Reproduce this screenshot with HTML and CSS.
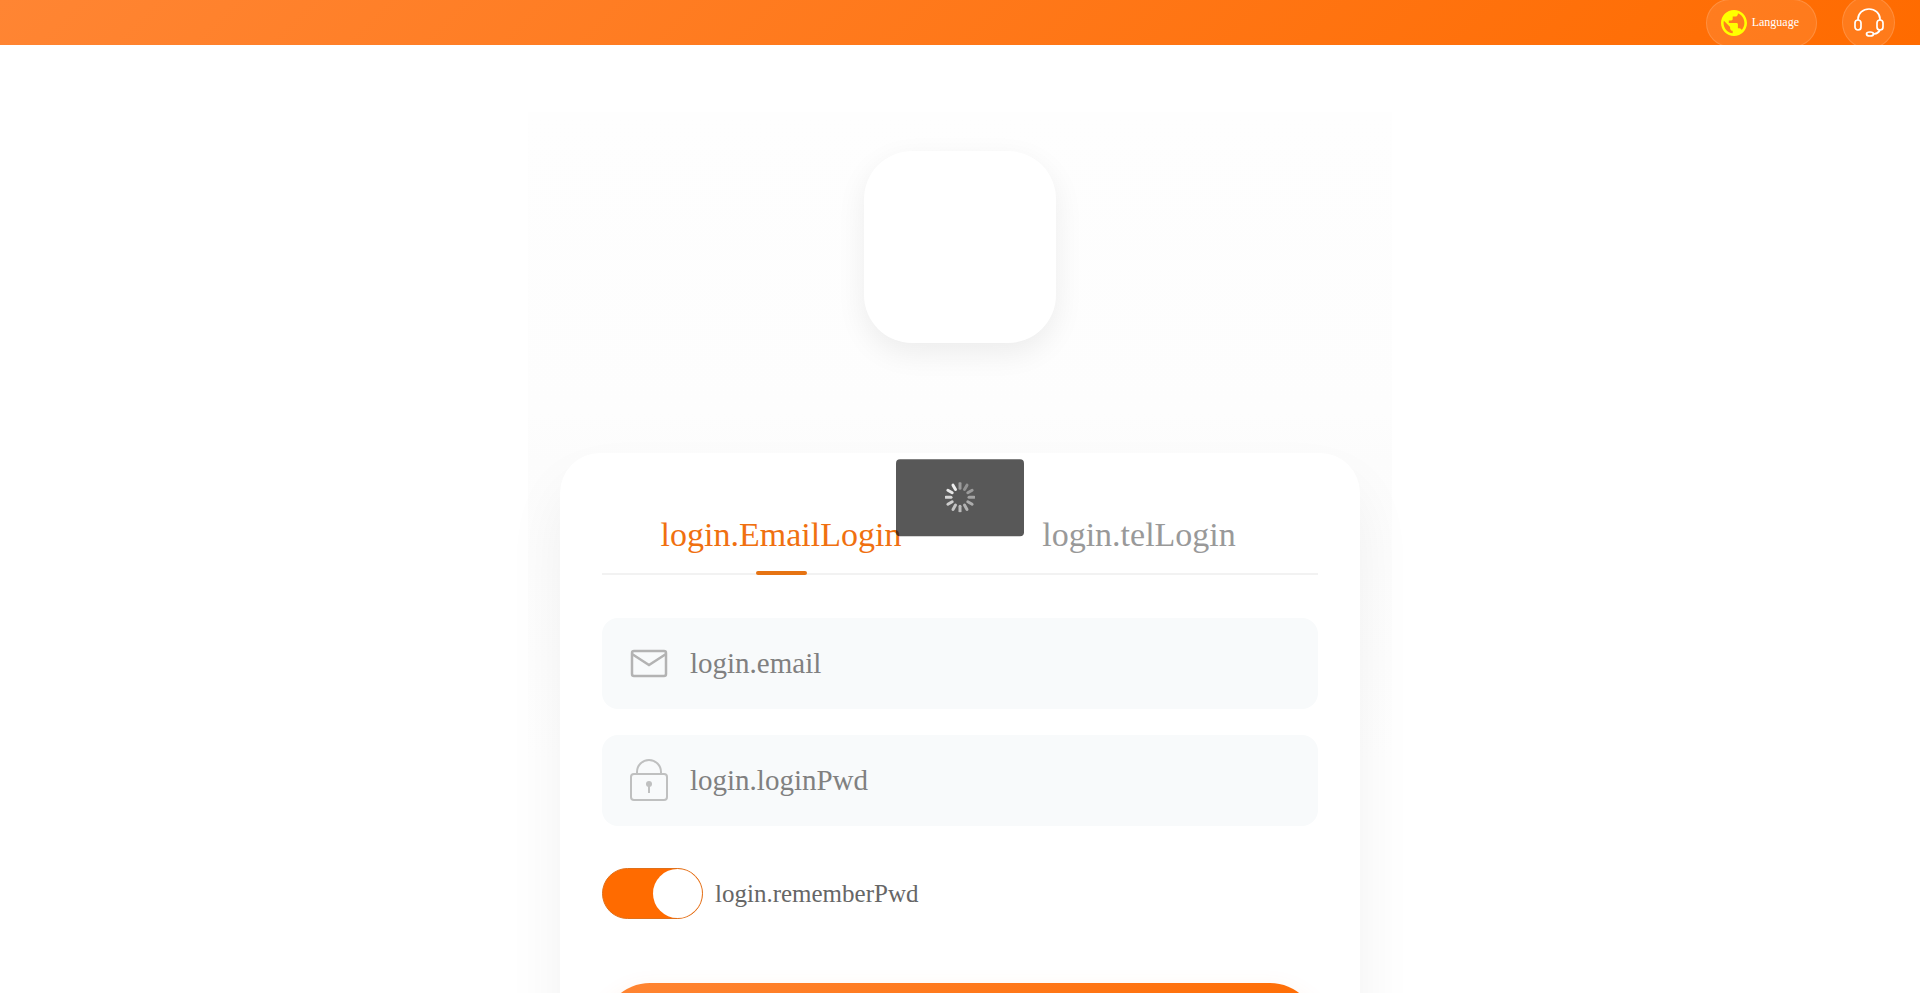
FILE: index.html
```html
<!DOCTYPE html>
<html lang="en">
<head>
  <meta charset="UTF-8">
  <meta name="viewport" content="width=device-width, initial-scale=1.0">
  <title>Login</title>
  <link rel="stylesheet" href="styles.css">
</head>
<body>
  <header class="top-bar">
    <button type="button" class="language-btn">
      <svg class="globe" viewBox="2 2 20 20" aria-hidden="true">
        <path d="M12 2C6.480 2 2 6.480 2 12s4.480 10 10 10 10-4.480 10-10S17.520 2 12 2zm-1 17.930c-3.950-.490-7-3.850-7-7.930 0-.620.080-1.210.210-1.790L9 15v1c0 1.100.900 2 2 2v1.930zm6.900-2.540c-.260-.810-1-1.390-1.900-1.390h-1v-3c0-.550-.450-1-1-1H8v-2h2c.550 0 1-.450 1-1V7h2c1.100 0 2-.900 2-2v-.410c2.930 1.190 5 4.060 5 7.410 0 2.080-.800 3.970-2.100 5.390z"/>
      </svg>
      <span>Language</span>
    </button>
    <button type="button" class="service-btn">
      <svg class="headset" viewBox="0 0 30 30" aria-hidden="true">
        <path d="M4 12v-1a11 10 0 0 1 22 0v1"/>
        <rect x="1" y="12" width="6" height="10" rx="3"/>
        <rect x="23" y="12" width="6" height="10" rx="3"/>
        <path d="M26 22c-1 2-3 3.500-6 4"/>
        <ellipse cx="16" cy="26" rx="3.500" ry="2"/>
      </svg>
    </button>
  </header>

  <main class="login-page">
    <div class="logo"></div>

    <form class="login-card">
      <div class="tabs">
        <button type="button" class="tab active">login.EmailLogin</button>
        <button type="button" class="tab">login.telLogin</button>
      </div>

      <label class="field">
        <svg class="field-icon" viewBox="0 0 40 44" aria-hidden="true">
          <rect x="3" y="9" width="34" height="25" rx="2"/>
          <path d="M3 12l17 11 17-11"/>
        </svg>
        <input type="email" placeholder="login.email">
      </label>

      <label class="field">
        <svg class="field-icon lock" viewBox="0 0 40 44" aria-hidden="true">
          <rect x="2" y="15" width="36" height="26" rx="3"/>
          <path d="M8 15v-2a12 12 0 0 1 24 0v2"/>
          <circle class="keyhole" cx="20" cy="25" r="3"/>
          <path d="M20 26v8"/>
        </svg>
        <input type="password" placeholder="login.loginPwd">
      </label>

      <label class="remember">
        <input type="checkbox" class="switch" checked>
        <span>login.rememberPwd</span>
      </label>

      <button type="submit" class="submit-btn"></button>
    </form>
  </main>

  <div class="loading">
    <svg class="spinner" viewBox="-15 -15 30 30" aria-hidden="true">
      <path d="M0-9v-5" opacity=".4"/>
      <path d="M0-9v-5" opacity=".35" transform="rotate(30)"/>
      <path d="M0-9v-5" opacity=".4" transform="rotate(60)"/>
      <path d="M0-9v-5" opacity=".45" transform="rotate(90)"/>
      <path d="M0-9v-5" opacity=".5" transform="rotate(120)"/>
      <path d="M0-9v-5" opacity=".55" transform="rotate(150)"/>
      <path d="M0-9v-5" opacity=".6" transform="rotate(180)"/>
      <path d="M0-9v-5" opacity=".65" transform="rotate(210)"/>
      <path d="M0-9v-5" opacity=".7" transform="rotate(240)"/>
      <path d="M0-9v-5" opacity=".75" transform="rotate(270)"/>
      <path d="M0-9v-5" opacity=".85" transform="rotate(300)"/>
      <path d="M0-9v-5" opacity=".9" transform="rotate(330)"/>
    </svg>
  </div>
</body>
</html>
```
FILE: styles.css
```css
* {
  box-sizing: border-box;
}

body {
  margin: 0;
  background: #fff;
  font-family: "Liberation Serif", "Times New Roman", serif;
}

button,
input {
  font-family: inherit;
}

/* top bar */
.top-bar {
  display: flex;
  justify-content: flex-end;
  align-items: center;
  gap: 25px;
  height: 45px;
  padding: 0 25px;
  overflow: hidden;
  background: linear-gradient(135deg, #ff8533, #ff6b00);
}

.language-btn,
.service-btn {
  display: flex;
  flex-shrink: 0;
  align-items: center;
  border: 1px solid rgba(255, 255, 255, 0.15);
  background: rgba(255, 255, 255, 0.1);
  color: #fff;
  cursor: pointer;
}

.language-btn {
  gap: 5px;
  height: 48px;
  padding: 0 17px 0 14px;
  border-radius: 24px;
  font-size: 12px;
}

.service-btn {
  justify-content: center;
  width: 53px;
  height: 53px;
  padding: 0;
  border-radius: 50%;
}

.globe {
  width: 26px;
  height: 26px;
  fill: #ff0;
}

.headset {
  width: 30px;
  height: 30px;
  fill: none;
  stroke: #fff;
  stroke-width: 1.7;
}

/* login */
.login-page {
  display: flex;
  flex-direction: column;
  align-items: center;
  gap: 110px;
  max-width: 864px;
  margin: 67px auto 0;
  padding: 39px 32px 64px;
  background: linear-gradient(#fefefe, #fdfdfd 300px, #fcfcfc 350px, #fff 650px);
}

.logo {
  width: 192px;
  height: 192px;
  border-radius: 48px;
  background: #fff;
  box-shadow: 0 10px 30px rgba(0, 0, 0, 0.07);
}

.login-card {
  width: 100%;
  padding: 42px;
  border-radius: 40px;
  background: #fff;
  box-shadow: 0 32px 60px rgba(0, 0, 0, 0.06);
}

.tabs {
  display: flex;
  margin-bottom: 43px;
  border-bottom: 2px solid #f2f2f2;
}

.tab {
  position: relative;
  flex: 1;
  height: 78px;
  padding: 2px 0 0;
  border: none;
  background: none;
  color: #999;
  font-size: 34px;
  cursor: pointer;
}

.tab.active {
  color: #f07010;
}

.tab.active::after {
  content: "";
  position: absolute;
  bottom: -2px;
  left: 50%;
  width: 51px;
  height: 4px;
  margin-left: -25px;
  border-radius: 2px;
  background: #e67312;
}

.field {
  display: flex;
  align-items: center;
  gap: 21px;
  height: 91px;
  margin-bottom: 26px;
  padding: 0 27px;
  border-radius: 16px;
  background: #f8fafb;
}

.field-icon {
  flex-shrink: 0;
  width: 40px;
  height: 44px;
  fill: none;
  stroke: #b3b3b3;
  stroke-width: 2.5;
}

.lock {
  stroke: #bfc0c0;
  stroke-width: 2;
}

.keyhole {
  fill: #bfc0c0;
  stroke: none;
}

.field input {
  flex: 1;
  min-width: 0;
  padding: 0;
  border: none;
  outline: none;
  background: none;
  color: #333;
  font-size: 29px;
}

.field input::placeholder {
  color: #808080;
}

.remember {
  display: flex;
  align-items: center;
  gap: 12px;
  margin: 42px 0 64px;
  color: #666;
  font-size: 25px;
}

.switch {
  appearance: none;
  display: flex;
  width: 101px;
  height: 51px;
  margin: 0;
  border: 1px solid #e0701a;
  border-radius: 26px;
  background: #fff;
  cursor: pointer;
}

.switch::before {
  content: "";
  width: 49px;
  height: 49px;
  border-radius: 50%;
  background: #fff;
}

.switch:checked {
  justify-content: flex-end;
  background: #ff6b00;
}

.submit-btn {
  display: block;
  width: 100%;
  height: 96px;
  border: none;
  border-radius: 48px;
  background: linear-gradient(135deg, #ff8533, #ff6b00);
  box-shadow: 0 8px 24px rgba(255, 107, 0, 0.1);
  cursor: pointer;
}

/* loading toast */
.loading {
  position: fixed;
  top: 50%;
  left: 50%;
  display: flex;
  align-items: center;
  justify-content: center;
  width: 128px;
  height: 77px;
  border-radius: 4px;
  background: rgba(17, 17, 17, 0.7);
  transform: translate(-50%, -49%);
}

.spinner {
  width: 30px;
  height: 30px;
  stroke: #fff;
  stroke-width: 3;
  stroke-linecap: round;
}
```
